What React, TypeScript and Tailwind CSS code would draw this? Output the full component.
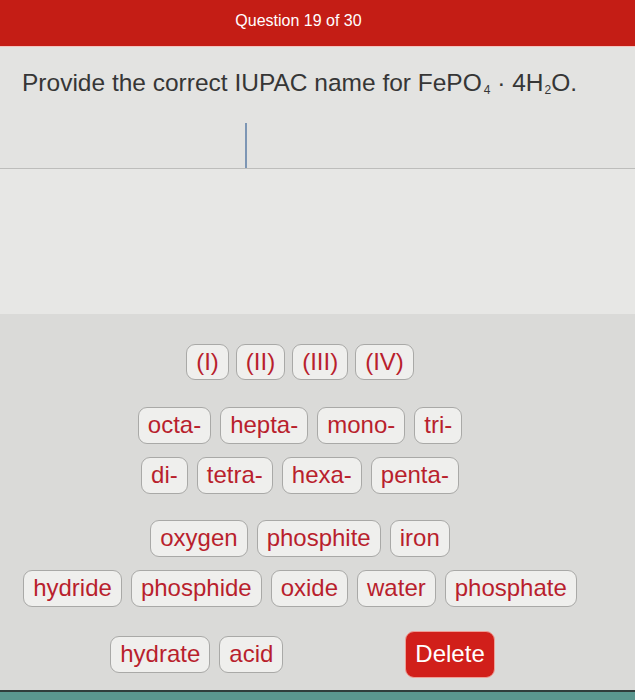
const rowOne = ["(I)", "(II)", "(III)", "(IV)"];
const rowTwo = ["octa-", "hepta-", "mono-", "tri-"];
const rowThree = ["di-", "tetra-", "hexa-", "penta-"];
const rowFour = ["oxygen", "phosphite", "iron"];
const rowFive = ["hydride", "phosphide", "oxide", "water", "phosphate"];

function Tile({ label }: { label: string }) {
  return (
    <button className="flex h-[37px] items-center rounded-[9px] border-[1.5px] border-[#a9a9a7] bg-[#efefed] px-[9px] text-[24px] leading-none text-[#b91f2d]">
      {label}
    </button>
  );
}

function TileRow({ items }: { items: string[] }) {
  return (
    <div className="flex justify-center gap-[9px]">
      {items.map((item) => (
        <Tile key={item} label={item} />
      ))}
    </div>
  );
}

export default function App() {
  return (
    <div
      className="flex h-[700px] w-full flex-col overflow-hidden bg-[#dadad8]"
      style={{ fontFamily: '"Liberation Sans", Arial, sans-serif' }}
    >
      <header className="flex h-[47px] shrink-0 items-center border-b border-[#f3c4c0] bg-[#c41d15] pb-[4px] pr-[38px]">
        <span className="w-full text-center text-[16px] text-white">
          Question 19 of 30
        </span>
      </header>

      <div className="bg-[#e3e3e1] px-[22px] pt-[24px]">
        <p className="text-[24.5px] leading-none text-[#363636]">
          Provide the correct IUPAC name for FePO
          <sub className="ml-[2px] text-[12px]">4</sub>
          {" "}· 4H<sub className="ml-[1px] text-[12px]">2</sub>O.
        </p>
      </div>

      <div className="h-[73px] shrink-0 border-b border-[#bdbdbb] bg-[#e3e3e1] pl-[245px] pt-[27px]">
        <div className="h-full w-[2px] bg-[#7d96b4]" />
      </div>

      <div className="h-[145px] shrink-0 bg-[#e7e7e5]" />

      <div className="flex flex-1 flex-col pr-[35px] pt-[30px]">
        <div className="flex justify-center gap-[7px]">
          {rowOne.map((item) => (
            <button
              key={item}
              className="flex h-[36px] items-center rounded-[9px] border-[1.5px] border-[#a9a9a7] bg-[#efefed] px-[9px] text-[24px] leading-none text-[#b91f2d]"
            >
              {item}
            </button>
          ))}
        </div>

        <div className="mt-[27px] flex flex-col gap-[13px]">
          <TileRow items={rowTwo} />
          <TileRow items={rowThree} />
        </div>

        <div className="mt-[26px] flex flex-col gap-[13px]">
          <TileRow items={rowFour} />
          <TileRow items={rowFive} />
        </div>

        <div className="mt-[24px] flex items-center justify-center gap-[122px] pl-[5px]">
          <div className="flex gap-[9px]">
            <Tile label="hydrate" />
            <Tile label="acid" />
          </div>
          <button className="flex h-[47px] items-center rounded-[9px] border border-[#ee9f97] bg-[#d11f1a] px-[9px] text-[24px] leading-none text-white">
            Delete
          </button>
        </div>
      </div>

      <div className="h-[10px] shrink-0 border-t-2 border-[#2f3d3b] bg-[#5a978f]" />
    </div>
  );
}
